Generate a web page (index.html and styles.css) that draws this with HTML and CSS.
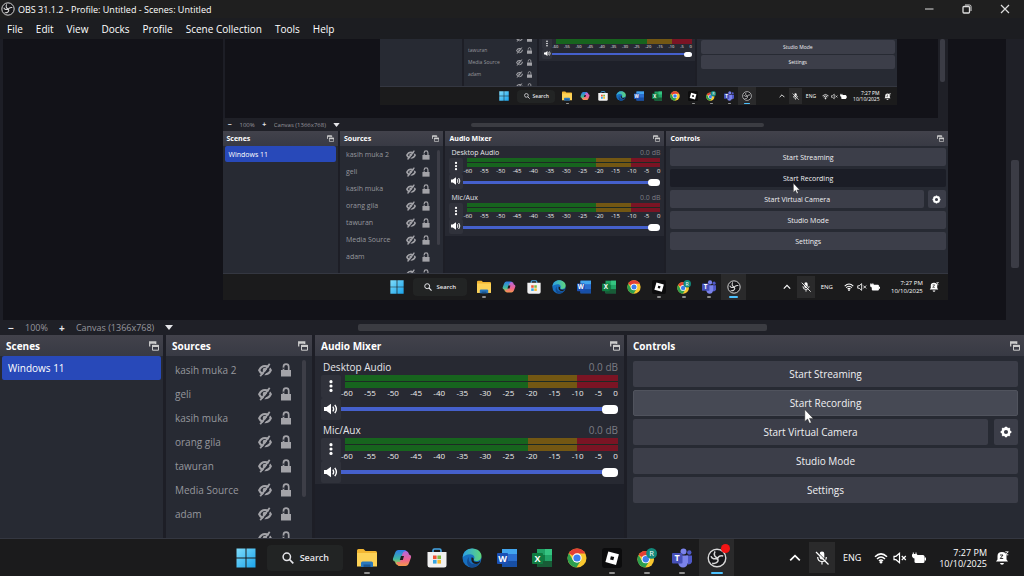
FILE: index.html
```html
<!DOCTYPE html>
<html lang="en">
<head>
<meta charset="utf-8">
<title>OBS 31.1.2 - Profile: Untitled - Scenes: Untitled</title>
<link rel="stylesheet" href="styles.css">
</head>
<body>
<svg class="paints" aria-hidden="true">
  <defs>
    <linearGradient id="g-win" x1="0" y1="0" x2="1" y2="1"><stop offset="0" stop-color="#7fdcfb"/><stop offset="1" stop-color="#1aa3ea"/></linearGradient>
    <linearGradient id="g-edge" x1="0" y1="0" x2="1" y2="0"><stop offset="0" stop-color="#2ba0e6"/><stop offset="1" stop-color="#5fd67a"/></linearGradient>
    <linearGradient id="g-cop1" x1="0" y1="0" x2="0" y2="1"><stop offset="0" stop-color="#2c7be8"/><stop offset=".6" stop-color="#3fb6a0"/><stop offset="1" stop-color="#e9c53a"/></linearGradient>
    <linearGradient id="g-cop2" x1="0" y1="0" x2="0" y2="1"><stop offset="0" stop-color="#b266e0"/><stop offset=".6" stop-color="#f0648c"/><stop offset="1" stop-color="#f59a4a"/></linearGradient>
  </defs>
</svg>
<svg class="sprite" aria-hidden="true">
  <symbol id="popout" viewBox="0 0 10 10"><path d="M.7 5.500V1h6v2M.7 2h6" fill="none" stroke="currentColor" stroke-width="1.300"/><path d="M3.500 4.300h6v4.900h-6z" fill="none" stroke="currentColor" stroke-width="1"/><path d="M3 4h7v2H3z" fill="currentColor"/></symbol>
  <symbol id="eye-off" viewBox="0 0 14 14"><path d="M1.200 7.200C2.500 4.300 4.500 3 7 3s4.500 1.300 5.800 4.200C11.500 10 9.500 11.200 7 11.200S2.500 10 1.200 7.200z" fill="none" stroke="currentColor" stroke-width="2.100"/><circle cx="7" cy="7.100" r="2.300" fill="currentColor"/><path d="M4 14L13.500 1.800" stroke="#262933" stroke-width="1.500"/><path d="M2.200 13.300L11.700.900" stroke="currentColor" stroke-width="1.800"/></symbol>
  <symbol id="lock" viewBox="0 0 12 14"><path d="M3.500 7V3.800a2.600 2.600 0 0 1 5.200 0V7" fill="none" stroke="currentColor" stroke-width="1.700"/><path d="M1 7h10v6.500H1z" fill="currentColor"/><path d="M2.500 5.200h2" stroke="#262933" stroke-width="1.200"/></symbol>
  <symbol id="dots" viewBox="0 0 6 16"><circle cx="3" cy="3" r="1.800" fill="currentColor"/><circle cx="3" cy="8" r="1.800" fill="currentColor"/><circle cx="3" cy="13" r="1.800" fill="currentColor"/></symbol>
  <symbol id="speaker" viewBox="0 0 14 12"><path d="M0 4h2.500L7 .8v10.400L2.500 8H0z" fill="currentColor"/><path d="M8.800 3.600q1.700 2.400 0 4.800M10.800 1.800q3.200 4.200 0 8.400" fill="none" stroke="currentColor" stroke-width="1.400"/></symbol>
  <symbol id="gear" viewBox="0 0 14 14"><circle cx="7" cy="7" r="3.900" fill="none" stroke="currentColor" stroke-width="3"/><path d="M7 .8v12.400M.8 7h12.400M2.600 2.600l8.800 8.800M11.400 2.600l-8.800 8.800" stroke="currentColor" stroke-width="2.300" stroke-dasharray="2 8.400 2 20"/></symbol>
  <symbol id="cursor" viewBox="0 0 10 16"><path d="M.5.500v12.800l3-2.600 2 4.600 2-.9-2-4.400H9.500z" fill="#fff" stroke="#222" stroke-width=".5"/></symbol>
  <symbol id="caret" viewBox="0 0 8 5"><path d="M0 0h8L4 5z" fill="currentColor"/></symbol>
  <symbol id="obs" viewBox="0 0 20 20"><circle cx="10" cy="10" r="8.800" fill="#17171a" stroke="#d8d8d8" stroke-width="1.400"/><path d="M8 3.400C6.300 6.800 8 9.500 10.500 9.800M16.200 8c-3.800-.8-5.900 1.300-5.700 4M5.200 15.200c3.500.8 6-.9 6-3.700M4 8.200c1 2.500 3.800 3.600 6.500 1.600" fill="none" stroke="#d8d8d8" stroke-width="1.500"/></symbol>
  <symbol id="win" viewBox="0 0 20 20"><path d="M.5.500h9v9h-9zM10.500.500h9v9h-9zM.5 10.500h9v9h-9zM10.500 10.500h9v9h-9z" fill="url(#g-win)"/></symbol>
  <symbol id="search" viewBox="0 0 12 12"><circle cx="4.800" cy="4.800" r="3.700" fill="none" stroke="currentColor" stroke-width="1.500"/><path d="M7.500 7.500l3.800 3.800" stroke="currentColor" stroke-width="1.700"/></symbol>
  <symbol id="folder" viewBox="0 0 20 20"><path d="M0 2.500Q0 1 1.500 1h5l2 2H18.500Q20 3 20 4.500V17H0z" fill="#f2b632"/><path d="M0 5h20v13.500H0z" fill="#fdd257"/><path d="M4 19v-4q0-1.500 1.500-1.500h9q1.500 0 1.500 1.500v4z" fill="#2a78bd"/><path d="M6.500 16.500h7V19h-7z" fill="#1b5590"/></symbol>
  <symbol id="copilot" viewBox="0 0 20 20"><path d="M6.500 2h6.200q1.600 0 2 1.500L15.500 6H12L9.500 14.500Q8.700 17 6.500 17 3.500 17 3 13.500.500 13 1 10.500L3 5q1-3 3.500-3z" fill="url(#g-cop1)"/><path d="M13.500 18H7.300q-1.600 0-2-1.500L4.500 14H8l2.500-8.500Q11.300 3 13.500 3 16.500 3 17 6.500q2.500.5 2 3L17 15q-1 3-3.500 3z" fill="url(#g-cop2)"/><path d="M9 8h3l-1.200 4H7.800z" fill="#1c1c1c"/></symbol>
  <symbol id="store" viewBox="0 0 20 20"><path d="M6 5V2.500Q6 1 7.500 1h5Q14 1 14 2.500V5" fill="none" stroke="#45a8e8" stroke-width="1.600"/><path d="M.5 4h19v13q0 2.500-2.500 2.500H3Q.5 19.500.5 17z" fill="#f1f1f1"/><path d="M6 7.500h3.600v3.600H6z" fill="#ef5334"/><path d="M10.400 7.500H14v3.600h-3.600z" fill="#7ebb42"/><path d="M6 12h3.600v3.600H6z" fill="#35a6e6"/><path d="M10.400 12H14v3.600h-3.600z" fill="#f6b92d"/></symbol>
  <symbol id="edge" viewBox="0 0 20 20"><circle cx="10" cy="10" r="9.500" fill="#176fc0"/><path d="M.6 9.500C1.200 3.500 5.500.500 10.200.500c5.500 0 9.300 3.700 9.300 7.500 0 3.500-2.700 5-5 5-2 0-3-.8-2.600-1.500 1.600-2.500-.3-5.300-3.700-5.300-3.300 0-6.300 1.300-7.600 3.300z" fill="url(#g-edge)"/><path d="M7 9c-1.500 5 2.500 9 10.700 6.500-1.700 2.600-4.500 4-7.700 4C5 19.500 3.500 12 7 9z" fill="#134b91"/><path d="M11.700 11.500q-.8 2.300 2.800 2.500 2.500 0 4.300-1.500-1 2.500-3.300 3.300C11 16.500 8.300 13 9.700 9.200q2.300.300 2 2.300z" fill="#1c1c1c"/></symbol>
  <symbol id="word" viewBox="0 0 20 20"><path d="M5 1h15v18H5z" fill="#2b6fd0"/><path d="M5 1h15v5H5z" fill="#42a5ee"/><path d="M5 13h15v6H5z" fill="#174fa5"/><rect x="0" y="5" width="11" height="11" rx="1" fill="#1b50b4"/><text x="5.500" y="13.500" class="glyph">W</text></symbol>
  <symbol id="excel" viewBox="0 0 20 20"><path d="M5 1h15v18H5z" fill="#21a366"/><path d="M13 1h7v6h-7z" fill="#35c481"/><path d="M5 7h8v6H5z" fill="#117a43"/><path d="M5 13h15v6H5z" fill="#185c37"/><rect x="0" y="5" width="11" height="11" rx="1" fill="#107c41"/><text x="5.500" y="13.500" class="glyph">X</text></symbol>
  <symbol id="chrome" viewBox="0 0 20 20"><circle cx="10" cy="10" r="9.500" fill="#f9c72f"/><path d="M10 10L1.800 5.200A9.500 9.500 0 0 1 18.300 5.400H10z" fill="#e33f34"/><path d="M1.800 5.200a9.500 9.500 0 0 0 7.600 14.300L14 12.300 6 12.300z" fill="#2d9f4f"/><circle cx="10" cy="10" r="4.700" fill="#fff"/><circle cx="10" cy="10" r="3.600" fill="#3b7ded"/></symbol>
  <symbol id="roblox" viewBox="0 0 20 20"><rect width="20" height="20" rx="3" fill="#0c0c0d"/><path d="M6.300 3.500l10.600 2.800-2.900 10.600L3.400 14.100z" fill="#fff"/><path d="M8.900 8.200l3.300.8-.9 3.200-3.200-.8z" fill="#0c0c0d"/></symbol>
  <symbol id="chrome-r" viewBox="0 0 24 24"><use href="#chrome" x="0" y="3" width="21" height="21"/><circle cx="17.500" cy="6.500" r="6.500" fill="#13897b"/><text x="17.500" y="9.500" class="glyph glyph--light">R</text></symbol>
  <symbol id="teams" viewBox="0 0 20 20"><circle cx="11.500" cy="3.500" r="3" fill="#7b83eb"/><circle cx="17.300" cy="4.500" r="2.200" fill="#5059c9"/><path d="M14 7.500h6v6q-.5 3-4 3z" fill="#5059c9"/><path d="M6 7.500h10v7q-1 5-5 5t-5-5z" fill="#7b83eb"/><rect x="0" y="5" width="10.500" height="10.500" rx="1" fill="#4650b8"/><text x="5.200" y="13.300" class="glyph">T</text></symbol>
  <symbol id="chevron" viewBox="0 0 10 6"><path d="M1 5l4-4 4 4" fill="none" stroke="currentColor" stroke-width="1.400"/></symbol>
  <symbol id="mic-off" viewBox="0 0 14 14"><rect x="4.700" y=".5" width="4.600" height="8" rx="2.300" fill="currentColor"/><path d="M2.700 6q0 4.500 4.300 4.500T11.300 6M7 10.500v3" fill="none" stroke="currentColor" stroke-width="1.200"/><path d="M2.300.8l11 11" stroke="#2a2a2b" stroke-width="1"/><path d="M1 1l12.500 12.500" stroke="currentColor" stroke-width="1.200"/></symbol>
  <symbol id="wifi" viewBox="0 0 14 12"><path d="M1 4.700q6-5.700 12 0M3 7q4-4 8 0M5 9q2-2 4 0" fill="none" stroke="currentColor" stroke-width="1.500"/><circle cx="7" cy="10.300" r="1.300" fill="currentColor"/></symbol>
  <symbol id="mute" viewBox="0 0 14 12"><path d="M1 4.300h2L6.500 1.300v9.400L3 7.700H1z" fill="none" stroke="currentColor" stroke-width="1.200"/><path d="M8.800 4l4 4M12.800 4l-4 4" stroke="currentColor" stroke-width="1.200"/></symbol>
  <symbol id="battery" viewBox="0 0 14 12"><rect x="2.500" y="3" width="10" height="8" rx="1.500" fill="currentColor"/><path d="M12.500 5.500H14v3h-1.500z" fill="currentColor"/><path d="M1.300.5v2M4 .5v2M.5 2.500h4.300v2q-.5 1.500-2.200 1.500T.5 4.500z" fill="currentColor" stroke="currentColor"/></symbol>
  <symbol id="bell" viewBox="0 0 14 14"><path d="M1 10.500l1.500-2V5q0-4 4.500-4 4.500 0 4.500 4v3.500l1.500 2z" fill="currentColor"/><path d="M5 12h4q-.3 1.700-2 1.700T5 12z" fill="currentColor"/><path d="M5 4h3L5.200 7.500h3" fill="none" stroke="#1c1c1c" stroke-width=".9"/><path d="M10.300.8h3l-3 3h3" fill="none" stroke="currentColor" stroke-width=".9"/></symbol>
</svg>

<div class="screen screen--full">
  <header class="titlebar">
    <svg class="titlebar__logo"><use href="#obs"/></svg>
    <h1 class="titlebar__text">OBS 31.1.2 - Profile: Untitled - Scenes: Untitled</h1>
    <div class="titlebar__buttons">
      <button class="winbtn" aria-label="Minimize"><svg viewBox="0 0 10 10"><path d="M1 5h8.500" stroke="currentColor"/></svg></button>
      <button class="winbtn" aria-label="Restore"><svg viewBox="0 0 10 10"><rect x="1" y="2.500" width="6.500" height="6.500" rx="1" fill="none" stroke="currentColor" stroke-width="1.300"/><path d="M3 1h4.500Q9 1 9 2.500V7" fill="none" stroke="currentColor"/></svg></button>
      <button class="winbtn" aria-label="Close"><svg viewBox="0 0 10 10"><path d="M1 1l8 8M9 1L1 9" stroke="currentColor" stroke-width="1.200"/></svg></button>
    </div>
  </header>
  <nav class="menubar">
    <button>File</button><button>Edit</button><button>View</button><button>Docks</button><button>Profile</button><button>Scene Collection</button><button>Tools</button><button>Help</button>
  </nav>

  <main class="preview">
    <div class="preview__canvas">

      <div class="screen screen--mid">
        <div class="preview">
          <div class="preview__canvas">

            <div class="screen screen--small">
              <div class="docks">
                <section class="dock"></section>
                <section class="dock">
                  <div class="sources">
                    <ul class="sources__list">
                      <li><span></span><svg><use href="#eye-off"/></svg><svg><use href="#lock"/></svg></li>
                      <li><span>tawuran</span><svg><use href="#eye-off"/></svg><svg><use href="#lock"/></svg></li>
                      <li><span>Media Source</span><svg><use href="#eye-off"/></svg><svg><use href="#lock"/></svg></li>
                      <li><span>adam</span><svg><use href="#eye-off"/></svg><svg><use href="#lock"/></svg></li>
                      <li><span></span><svg><use href="#eye-off"/></svg><svg><use href="#lock"/></svg></li>
                    </ul>
                  </div>
                </section>
                <section class="dock dock--mixer">
                  <div class="mixer">
                    <div class="channel">
                      <div class="channel__buttons"><button aria-label="Options"><svg class="dots"><use href="#dots"/></svg></button><button aria-label="Mute"><svg class="speaker"><use href="#speaker"/></svg></button></div>
                      <div class="channel__levels">
                        <div class="meter"></div>
                        <div class="scale"><span>-60</span><span>-55</span><span>-50</span><span>-45</span><span>-40</span><span>-35</span><span>-30</span><span>-25</span><span>-20</span><span>-15</span><span>-10</span><span>-5</span><span>0</span></div>
                        <input class="fader" type="range" value="100" aria-label="Mic/Aux volume">
                      </div>
                    </div>
                  </div>
                </section>
                <section class="dock">
                  <div class="controls">
                    <button class="btn">Studio Mode</button>
                    <button class="btn">Settings</button>
                  </div>
                </section>
              </div>
              <footer class="taskbar">
                <button class="app" aria-label="Start"><svg><use href="#win"/></svg></button>
                <button class="search"><svg><use href="#search"/></svg>Search</button>
                <button class="app app--open" aria-label="File Explorer"><svg><use href="#folder"/></svg></button>
                <button class="app" aria-label="Copilot"><svg><use href="#copilot"/></svg></button>
                <button class="app" aria-label="Store"><svg><use href="#store"/></svg></button>
                <button class="app" aria-label="Edge"><svg><use href="#edge"/></svg></button>
                <button class="app" aria-label="Word"><svg><use href="#word"/></svg></button>
                <button class="app" aria-label="Excel"><svg><use href="#excel"/></svg></button>
                <button class="app" aria-label="Chrome"><svg><use href="#chrome"/></svg></button>
                <button class="app app--open" aria-label="Roblox"><svg><use href="#roblox"/></svg></button>
                <button class="app app--open" aria-label="Chrome profile"><svg><use href="#chrome-r"/></svg></button>
                <button class="app app--open" aria-label="Teams"><svg><use href="#teams"/></svg></button>
                <button class="app app--active" aria-label="OBS"><svg><use href="#obs"/></svg></button>
                <div class="tray">
                  <button class="tray__chevron" aria-label="Hidden icons"><svg><use href="#chevron"/></svg></button>
                  <button class="tray__mic" aria-label="Microphone"><svg><use href="#mic-off"/></svg></button>
                  <span class="tray__lang">ENG</span>
                  <div class="tray__status"><svg><use href="#wifi"/></svg><svg><use href="#mute"/></svg><svg><use href="#battery"/></svg></div>
                  <div class="tray__clock"><span>7:27 PM</span><span>10/10/2025</span></div>
                  <svg class="tray__bell"><use href="#bell"/></svg>
                </div>
              </footer>
            </div>

          </div>
          <div class="vscroll"><div class="vscroll__thumb"></div></div>
        </div>
        <div class="zoombar">
          <button class="zoombar__step" aria-label="Zoom out">−</button><span class="zoombar__value">100%</span><button class="zoombar__step" aria-label="Zoom in">+</button>
          <select class="zoombar__mode" aria-label="Preview scale"><option>Canvas (1366x768)</option></select><svg class="zoombar__caret"><use href="#caret"/></svg>
          <div class="hscroll"><div class="hscroll__thumb"></div></div>
        </div>
        <div class="docks">
          <section class="dock">
            <h2 class="dock__head">Scenes<svg><use href="#popout"/></svg></h2>
            <ul class="scenes"><li><button class="scene">Windows 11</button></li></ul>
          </section>
          <section class="dock">
            <h2 class="dock__head">Sources<svg><use href="#popout"/></svg></h2>
            <div class="sources">
              <ul class="sources__list">
                <li><span>kasih muka 2</span><svg><use href="#eye-off"/></svg><svg><use href="#lock"/></svg></li>
                <li><span>geli</span><svg><use href="#eye-off"/></svg><svg><use href="#lock"/></svg></li>
                <li><span>kasih muka</span><svg><use href="#eye-off"/></svg><svg><use href="#lock"/></svg></li>
                <li><span>orang gila</span><svg><use href="#eye-off"/></svg><svg><use href="#lock"/></svg></li>
                <li><span>tawuran</span><svg><use href="#eye-off"/></svg><svg><use href="#lock"/></svg></li>
                <li><span>Media Source</span><svg><use href="#eye-off"/></svg><svg><use href="#lock"/></svg></li>
                <li><span>adam</span><svg><use href="#eye-off"/></svg><svg><use href="#lock"/></svg></li>
                <li><span></span><svg><use href="#eye-off"/></svg><svg><use href="#lock"/></svg></li>
              </ul>
              <div class="sources__scroll"></div>
            </div>
          </section>
          <section class="dock dock--mixer">
            <h2 class="dock__head">Audio Mixer<svg><use href="#popout"/></svg></h2>
            <div class="mixer">
              <div class="channel">
                <div class="channel__name"><span>Desktop Audio</span><span class="channel__db">0.0 dB</span></div>
                <div class="channel__buttons"><button aria-label="Options"><svg class="dots"><use href="#dots"/></svg></button><button aria-label="Mute"><svg class="speaker"><use href="#speaker"/></svg></button></div>
                <div class="channel__levels">
                  <div class="meter"></div>
                  <div class="scale"><span>-60</span><span>-55</span><span>-50</span><span>-45</span><span>-40</span><span>-35</span><span>-30</span><span>-25</span><span>-20</span><span>-15</span><span>-10</span><span>-5</span><span>0</span></div>
                  <input class="fader" type="range" value="100" aria-label="Desktop Audio volume">
                </div>
              </div>
              <div class="channel">
                <div class="channel__name"><span>Mic/Aux</span><span class="channel__db">0.0 dB</span></div>
                <div class="channel__buttons"><button aria-label="Options"><svg class="dots"><use href="#dots"/></svg></button><button aria-label="Mute"><svg class="speaker"><use href="#speaker"/></svg></button></div>
                <div class="channel__levels">
                  <div class="meter"></div>
                  <div class="scale"><span>-60</span><span>-55</span><span>-50</span><span>-45</span><span>-40</span><span>-35</span><span>-30</span><span>-25</span><span>-20</span><span>-15</span><span>-10</span><span>-5</span><span>0</span></div>
                  <input class="fader" type="range" value="100" aria-label="Mic/Aux volume">
                </div>
              </div>
            </div>
          </section>
          <section class="dock">
            <h2 class="dock__head">Controls<svg><use href="#popout"/></svg></h2>
            <div class="controls">
              <button class="btn">Start Streaming</button>
              <button class="btn btn--pressed">Start Recording<svg class="pointer"><use href="#cursor"/></svg></button>
              <div class="controls__row"><button class="btn">Start Virtual Camera</button><button class="btn btn--gear" aria-label="Virtual camera settings"><svg><use href="#gear"/></svg></button></div>
              <button class="btn">Studio Mode</button>
              <button class="btn">Settings</button>
            </div>
          </section>
        </div>
        <footer class="taskbar">
          <button class="app" aria-label="Start"><svg><use href="#win"/></svg></button>
          <button class="search"><svg><use href="#search"/></svg>Search</button>
          <button class="app app--open" aria-label="File Explorer"><svg><use href="#folder"/></svg></button>
          <button class="app" aria-label="Copilot"><svg><use href="#copilot"/></svg></button>
          <button class="app" aria-label="Store"><svg><use href="#store"/></svg></button>
          <button class="app" aria-label="Edge"><svg><use href="#edge"/></svg></button>
          <button class="app" aria-label="Word"><svg><use href="#word"/></svg></button>
          <button class="app" aria-label="Excel"><svg><use href="#excel"/></svg></button>
          <button class="app" aria-label="Chrome"><svg><use href="#chrome"/></svg></button>
          <button class="app app--open" aria-label="Roblox"><svg><use href="#roblox"/></svg></button>
          <button class="app app--open" aria-label="Chrome profile"><svg><use href="#chrome-r"/></svg></button>
          <button class="app app--open" aria-label="Teams"><svg><use href="#teams"/></svg></button>
          <button class="app app--active" aria-label="OBS"><svg><use href="#obs"/></svg></button>
          <div class="tray">
            <button class="tray__chevron" aria-label="Hidden icons"><svg><use href="#chevron"/></svg></button>
            <button class="tray__mic" aria-label="Microphone"><svg><use href="#mic-off"/></svg></button>
            <span class="tray__lang">ENG</span>
            <div class="tray__status"><svg><use href="#wifi"/></svg><svg><use href="#mute"/></svg><svg><use href="#battery"/></svg></div>
            <div class="tray__clock"><span>7:27 PM</span><span>10/10/2025</span></div>
            <svg class="tray__bell"><use href="#bell"/></svg>
          </div>
        </footer>
      </div>

    </div>
    <div class="vscroll"><div class="vscroll__thumb"></div></div>
  </main>

  <div class="zoombar">
    <button class="zoombar__step" aria-label="Zoom out">−</button><span class="zoombar__value">100%</span><button class="zoombar__step" aria-label="Zoom in">+</button>
    <select class="zoombar__mode" aria-label="Preview scale"><option>Canvas (1366x768)</option></select><svg class="zoombar__caret"><use href="#caret"/></svg>
    <div class="hscroll"><div class="hscroll__thumb"></div></div>
  </div>
  <div class="docks">
    <section class="dock">
      <h2 class="dock__head">Scenes<svg><use href="#popout"/></svg></h2>
      <ul class="scenes"><li><button class="scene">Windows 11</button></li></ul>
    </section>
    <section class="dock">
      <h2 class="dock__head">Sources<svg><use href="#popout"/></svg></h2>
      <div class="sources">
        <ul class="sources__list">
          <li><span>kasih muka 2</span><svg><use href="#eye-off"/></svg><svg><use href="#lock"/></svg></li>
          <li><span>geli</span><svg><use href="#eye-off"/></svg><svg><use href="#lock"/></svg></li>
          <li><span>kasih muka</span><svg><use href="#eye-off"/></svg><svg><use href="#lock"/></svg></li>
          <li><span>orang gila</span><svg><use href="#eye-off"/></svg><svg><use href="#lock"/></svg></li>
          <li><span>tawuran</span><svg><use href="#eye-off"/></svg><svg><use href="#lock"/></svg></li>
          <li><span>Media Source</span><svg><use href="#eye-off"/></svg><svg><use href="#lock"/></svg></li>
          <li><span>adam</span><svg><use href="#eye-off"/></svg><svg><use href="#lock"/></svg></li>
          <li><span></span><svg><use href="#eye-off"/></svg><svg><use href="#lock"/></svg></li>
        </ul>
        <div class="sources__scroll"></div>
      </div>
    </section>
    <section class="dock dock--mixer">
      <h2 class="dock__head">Audio Mixer<svg><use href="#popout"/></svg></h2>
      <div class="mixer">
        <div class="channel">
          <div class="channel__name"><span>Desktop Audio</span><span class="channel__db">0.0 dB</span></div>
          <div class="channel__buttons"><button aria-label="Options"><svg class="dots"><use href="#dots"/></svg></button><button aria-label="Mute"><svg class="speaker"><use href="#speaker"/></svg></button></div>
          <div class="channel__levels">
            <div class="meter"></div>
            <div class="scale"><span>-60</span><span>-55</span><span>-50</span><span>-45</span><span>-40</span><span>-35</span><span>-30</span><span>-25</span><span>-20</span><span>-15</span><span>-10</span><span>-5</span><span>0</span></div>
            <input class="fader" type="range" value="100" aria-label="Desktop Audio volume">
          </div>
        </div>
        <div class="channel">
          <div class="channel__name"><span>Mic/Aux</span><span class="channel__db">0.0 dB</span></div>
          <div class="channel__buttons"><button aria-label="Options"><svg class="dots"><use href="#dots"/></svg></button><button aria-label="Mute"><svg class="speaker"><use href="#speaker"/></svg></button></div>
          <div class="channel__levels">
            <div class="meter"></div>
            <div class="scale"><span>-60</span><span>-55</span><span>-50</span><span>-45</span><span>-40</span><span>-35</span><span>-30</span><span>-25</span><span>-20</span><span>-15</span><span>-10</span><span>-5</span><span>0</span></div>
            <input class="fader" type="range" value="100" aria-label="Mic/Aux volume">
          </div>
        </div>
      </div>
    </section>
    <section class="dock">
      <h2 class="dock__head">Controls<svg><use href="#popout"/></svg></h2>
      <div class="controls">
        <button class="btn">Start Streaming</button>
        <button class="btn btn--hover">Start Recording<svg class="pointer"><use href="#cursor"/></svg></button>
        <div class="controls__row"><button class="btn">Start Virtual Camera</button><button class="btn btn--gear" aria-label="Virtual camera settings"><svg><use href="#gear"/></svg></button></div>
        <button class="btn">Studio Mode</button>
        <button class="btn">Settings</button>
      </div>
    </section>
  </div>
  <footer class="taskbar">
    <button class="app" aria-label="Start"><svg><use href="#win"/></svg></button>
    <button class="search"><svg><use href="#search"/></svg>Search</button>
    <button class="app app--open" aria-label="File Explorer"><svg><use href="#folder"/></svg></button>
    <button class="app" aria-label="Copilot"><svg><use href="#copilot"/></svg></button>
    <button class="app" aria-label="Store"><svg><use href="#store"/></svg></button>
    <button class="app" aria-label="Edge"><svg><use href="#edge"/></svg></button>
    <button class="app" aria-label="Word"><svg><use href="#word"/></svg></button>
    <button class="app" aria-label="Excel"><svg><use href="#excel"/></svg></button>
    <button class="app" aria-label="Chrome"><svg><use href="#chrome"/></svg></button>
    <button class="app app--open" aria-label="Roblox"><svg><use href="#roblox"/></svg></button>
    <button class="app app--open" aria-label="Chrome profile"><svg><use href="#chrome-r"/></svg></button>
    <button class="app app--open" aria-label="Teams"><svg><use href="#teams"/></svg></button>
    <button class="app app--active" aria-label="OBS"><svg><use href="#obs"/></svg><span class="app__dot"></span></button>
    <div class="tray">
      <button class="tray__chevron" aria-label="Hidden icons"><svg><use href="#chevron"/></svg></button>
      <button class="tray__mic" aria-label="Microphone"><svg><use href="#mic-off"/></svg></button>
      <span class="tray__lang">ENG</span>
      <div class="tray__status"><svg><use href="#wifi"/></svg><svg><use href="#mute"/></svg><svg><use href="#battery"/></svg></div>
      <div class="tray__clock"><span>7:27 PM</span><span>10/10/2025</span></div>
      <svg class="tray__bell"><use href="#bell"/></svg>
    </div>
  </footer>
</div>
</body>
</html>
```
FILE: styles.css
```css
* { box-sizing: border-box; }
body { margin: 0; background: #1d1e25; color: #e6e6ea; font-family: "Open Sans", "Noto Sans", sans-serif; }
button, input, select { font: inherit; color: inherit; margin: 0; padding: 0; border: 0; background: none; }
ul { list-style: none; margin: 0; padding: 0; }
h1, h2 { margin: 0; font: inherit; }
svg { display: block; flex: none; }
.paints { position: absolute; width: 0; height: 0; }
.sprite { display: none; }
.glyph { font: bold 9px "Open Sans", sans-serif; fill: #fff; text-anchor: middle; }
.glyph--light { font-weight: normal; }

/* The same window is shown at three sizes, each with its own measures. */
.screen {
  display: flex; flex-direction: column; min-width: 0;
  font-size: var(--text); line-height: 1; background: #1d1e26;
}
.screen--full {
  height: 100vh; min-height: 480px;
  --text: 10px; --label: 10px; --small: 9px; --tiny: 8px;
  --head: 21px; --dock-h: 204px; --gap: 3px; --edge: 6px;
  --popout: 10px; --row: 24px; --row-pad: 9px; --row-icon: 14px; --icon-gap: 7px;
  --scene: 24px; --btn: 26px; --btn-gap: 3px; --gear: 24px; --gear-icon: 12px;
  --name: 17px; --meter: 13px; --scale: 10px; --fader: 22px; --ch-gap: 1px; --chbtn: 20px; --thumb-w: 16px; --thumb-h: 9px; --line: 4px;
  --bar: 15px; --bar-gap: 9px; --step: 10px; --vs: 18px; --vs-thumb: 8px; --hs: 7px;
  --task: 37px; --cell: 35px; --icon: 20px; --pill: 76px; --pill-h: 26px; --pill-gap: 6px; --search-icon: 12px;
  --tray-icon: 14px; --tray-gap: 8px; --status-gap: 5px; --status-pad: 5px; --tray-edge: 15px; --mic: 26px; --ptr: 15px; --dash: 2px;
}
.screen--mid {
  --text: 7px; --label: 7px; --small: 6px; --tiny: 6px;
  --head: 15px; --dock-h: 143px; --gap: 2px; --edge: 4px;
  --popout: 7px; --row: 17px; --row-pad: 6px; --row-icon: 10px; --icon-gap: 5px;
  --scene: 16px; --btn: 18px; --btn-gap: 3px; --gear: 18px; --gear-icon: 9px;
  --name: 12px; --meter: 9px; --scale: 8px; --fader: 14px; --ch-gap: 2px; --chbtn: 14px; --thumb-w: 12px; --thumb-h: 7px; --line: 3px;
  --bar: 13px; --bar-gap: 6px; --step: 7px; --vs: 10px; --vs-thumb: 5px; --hs: 4px;
  --task: 26px; --cell: 25px; --icon: 14px; --pill: 54px; --pill-h: 18px; --pill-gap: 4px; --search-icon: 8px;
  --tray-icon: 10px; --tray-gap: 6px; --status-gap: 3px; --status-pad: 5px; --tray-edge: 9px; --mic: 18px; --ptr: 11px; --dash: 2px;
}
.screen--small {
  --text: 5px; --label: 5px; --small: 5px; --tiny: 4px;
  --dock-h: 55px; --gap: 2px; --edge: 3px;
  --row: 12px; --row-pad: 4px; --row-icon: 7px; --icon-gap: 3px;
  --btn: 14px; --btn-gap: 1px;
  --name: 9px; --meter: 6px; --scale: 5px; --fader: 10px; --ch-gap: 2px; --chbtn: 10px; --thumb-w: 8px; --thumb-h: 5px; --line: 2px;
  --task: 18px; --cell: 18px; --icon: 10px; --pill: 38px; --pill-h: 13px; --pill-gap: 3px; --search-icon: 6px;
  --tray-icon: 7px; --tray-gap: 4px; --status-gap: 2px; --status-pad: 2px; --tray-edge: 6px; --mic: 13px; --dash: 1px;
}

/* Title and menu */
.titlebar { display: flex; align-items: center; height: 18px; background: #1f1f1f; }
.titlebar__logo { width: 14px; height: 14px; margin: 0 3px 0 1px; }
.titlebar__text { font-size: var(--small); font-weight: 500; color: #fff; }
.titlebar__buttons { display: flex; margin-left: auto; }
.winbtn { display: grid; place-items: center; width: 38px; height: 18px; color: #ddd; }
.winbtn svg { width: 10px; height: 10px; }
.menubar { display: flex; align-items: center; gap: 13px; height: 21px; padding: 0 7px; background: #1c1d21; color: #fff; }

/* Preview */
.preview { flex: 1; display: flex; min-height: 0; }
.preview__canvas { flex: 1; display: flex; align-items: flex-end; min-width: 0; overflow: hidden; background: #121218; }
.screen--full > .preview { padding-left: 3px; }
.screen--full > .preview > .preview__canvas { align-items: stretch; padding: 0 5.7% 20px 21.5%; }
.screen--mid { flex: 1; }
.screen--mid > .preview { padding-left: 2px; }
.screen--mid > .preview > .preview__canvas { padding: 0 5.7% 13px 21.5%; }
.screen--small { flex: 1; }
.vscroll { display: flex; flex-direction: column; align-items: center; width: var(--vs); background: #1f2027; }
.vscroll__thumb { flex: 108; width: var(--vs-thumb); background: #3b3c45; border-radius: 2px; }
.vscroll::before { content: ""; flex: 121; }
.vscroll::after { content: ""; flex: 52; }
.screen--mid .vscroll::before { flex: 0; }
.screen--mid .vscroll::after { flex: 92; }

.zoombar { display: flex; align-items: center; flex: none; gap: var(--bar-gap); height: var(--bar); padding: 0 var(--edge); color: #96969d; background: #1f2027; font-size: var(--small); }
.zoombar__step { width: var(--step); color: #e6e6ea; font-size: var(--text); font-weight: bold; line-height: 1; }
.zoombar__mode { appearance: none; }
.zoombar__caret { width: var(--step); height: 5px; color: #e6e6ea; }
.screen--mid .zoombar__caret { height: 4px; }
.hscroll { flex: 1; }
.hscroll__thumb { width: 49%; height: var(--hs); margin-left: 21%; background: #3b3c42; border-radius: 2px; }

/* Docks */
.docks { display: grid; grid-template-columns: 163fr 146fr 309fr 397fr; gap: var(--gap); flex: none; height: var(--dock-h); border-bottom: 1px solid #343741; }
.dock { display: flex; flex-direction: column; min-width: 0; overflow: hidden; background: #272a33; }
.dock--mixer { background: #1e2029; }
.dock__head { display: flex; align-items: center; justify-content: space-between; flex: none; height: var(--head); padding: 0 4px 0 var(--edge); font-weight: bold; color: #fff; background: linear-gradient(#42424b, #383a44); }
.dock__head svg { width: var(--popout); height: var(--popout); color: #ccc; }
.scenes { padding: 0 2px; }
.scene { display: block; width: 100%; height: var(--scene); padding-left: var(--edge); text-align: left; color: #fff; background: #2849b9; border-radius: 2px; }
.sources { display: flex; flex: 1; min-height: 0; }
.sources__list { flex: 1; }
.screen--full > .docks .sources__list { padding-top: 2px; }
.sources__list li { display: flex; align-items: center; gap: var(--icon-gap); height: var(--row); padding: 0 var(--row-pad); color: #96979d; }
.sources__list li span { flex: 1; white-space: nowrap; }
.sources__list svg { width: var(--row-icon); height: var(--row-icon); color: #a3a3a8; }
.sources__scroll { width: 4px; height: 75%; margin: 4px 6px 0 0; border-radius: 2px; background: #3d3e47; }
.screen--mid .sources__scroll { width: 3px; margin-right: 3px; }

/* Mixer */
.mixer { padding: 2px var(--edge) 0; background: #272932; }
.screen--mid .mixer { padding-top: 0; }
.screen--small .mixer { padding-top: 6px; }
.channel { display: grid; grid-template-columns: var(--chbtn) 1fr; margin-bottom: var(--ch-gap); }
.channel__name { grid-column: 1 / -1; display: flex; justify-content: space-between; align-items: center; height: var(--name); padding-left: 2px; font-size: var(--label); }
.channel__db { color: #7b7c84; }
.channel__buttons { display: flex; flex-direction: column; }
.channel__buttons button { flex: 1; display: grid; place-items: center; background: #30323b; border-radius: 2px; }
.dots { width: 6px; height: var(--row-icon); color: #fff; }
.speaker { width: var(--row-icon); height: var(--row-icon); color: #fff; }
.meter { height: var(--meter); margin-left: 4px; background: linear-gradient(transparent 45%, #1d2a24 45%, #1d2a24 52%, transparent 52%), linear-gradient(90deg, #17641e 67%, #735713 67%, #735713 85%, #7a1424 85%); }
.scale { display: flex; justify-content: space-between; align-items: center; height: var(--scale); font-size: var(--tiny); font-weight: 500; color: #eee; }
.fader { display: block; width: 100%; height: var(--fader); appearance: none; background: linear-gradient(#4560cc, #4560cc) center / 100% var(--line) no-repeat; }
.fader::-webkit-slider-thumb { appearance: none; width: var(--thumb-w); height: var(--thumb-h); border-radius: 4px; background: #fff; }

/* Controls */
.controls { display: flex; flex-direction: column; gap: var(--btn-gap); padding: 5px var(--edge) 0; }
.screen--mid .controls { padding: 2px 2px 0 4px; }
.screen--small .controls { padding-top: 8px; }
.controls__row { display: flex; gap: var(--edge); }
.btn { position: relative; flex: 1 1 auto; height: var(--btn); background: #3c3e49; border-radius: 2px; color: #f0f0f3; }
.btn--hover { background: #464954; border: 1px solid #50535d; }
.btn--pressed { background: #1b1d26; }
.btn--gear { flex: none; display: grid; place-items: center; width: var(--gear); color: #fff; }
.btn--gear svg { width: var(--gear-icon); height: var(--gear-icon); }
.pointer { position: absolute; left: 44%; top: 75%; z-index: 1; width: var(--gear-icon); height: var(--ptr); }

/* Taskbar */
.taskbar { display: flex; align-items: center; flex: none; height: var(--task); padding-left: 22.3%; background: #1b1b1c; }
.app { position: relative; display: grid; place-items: center; flex: none; width: var(--cell); height: 100%; }
.app svg { width: var(--icon); height: var(--icon); }
.app--open::after, .app--active::after { content: ""; position: absolute; bottom: var(--dash); left: 42%; width: 16%; height: var(--dash); border-radius: 1px; background: #8f8f8f; }
.app--active { background: #2a2a2b; }
.app--active::after { left: 32%; width: 36%; background: #4cc2ff; }
.app__dot { position: absolute; top: 5px; right: 4px; width: 9px; height: 9px; border-radius: 50%; background: #f41414; }
.search { display: flex; align-items: center; justify-content: center; flex: none; gap: var(--pill-gap); width: var(--pill); height: var(--pill-h); margin: 0 var(--pill-gap) 0 4px; border-radius: 4px; background: #222424; font-size: var(--small); font-weight: 600; }
.search svg { width: var(--search-icon); height: var(--search-icon); }
.tray { display: flex; align-items: center; gap: var(--tray-gap); height: 100%; margin-left: auto; padding-right: var(--tray-edge); font-size: var(--small); font-weight: 500; color: #fff; }
.tray__chevron svg { width: var(--search-icon); height: var(--search-icon); }
.tray__mic { display: grid; place-items: center; width: var(--mic); height: 86%; background: #2a2a2b; }
.tray__mic svg, .tray__bell, .tray__status svg { width: var(--tray-icon); height: var(--tray-icon); }
.tray__status { display: flex; gap: var(--status-gap); margin: 0 var(--status-pad); }
.tray__clock { display: flex; flex-direction: column; align-items: flex-end; gap: var(--dash); }
```
